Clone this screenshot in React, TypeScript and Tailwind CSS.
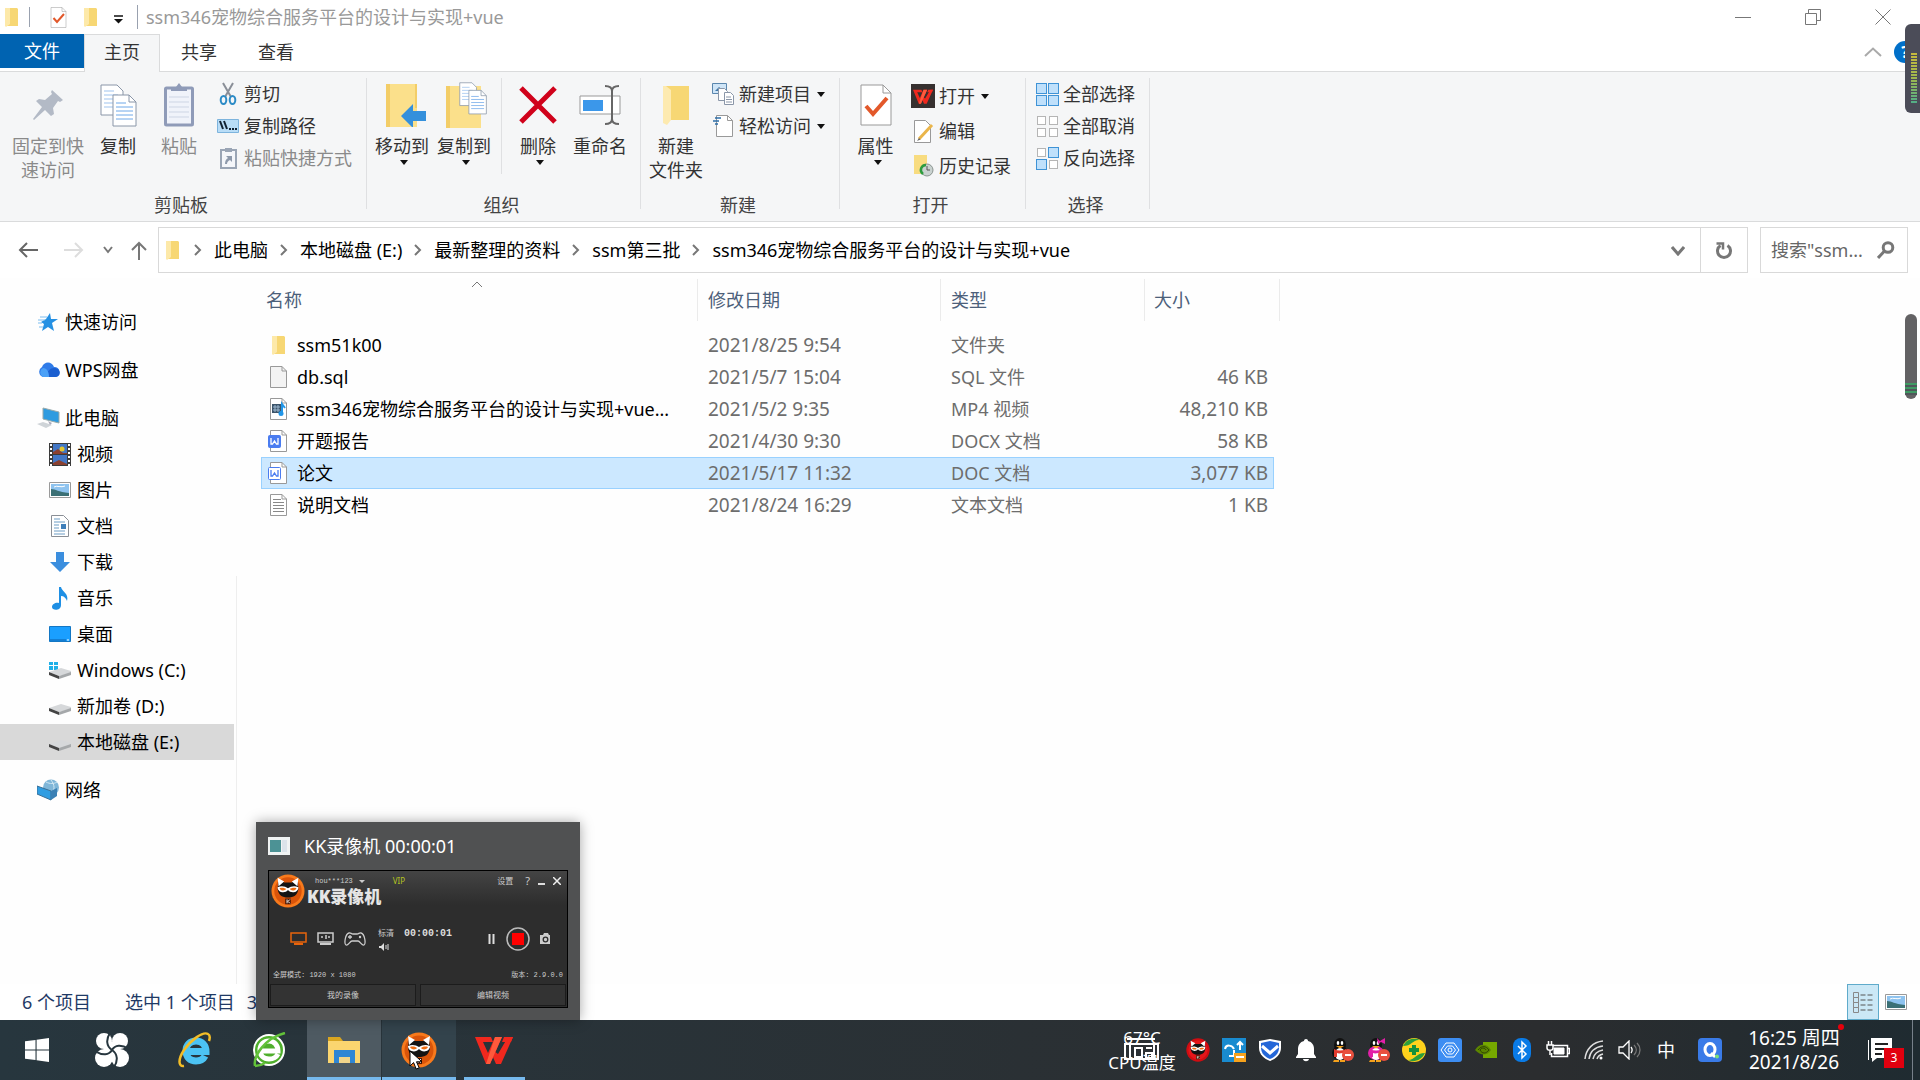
import type { ReactNode } from "react";

const BREADCRUMB = ["此电脑", "本地磁盘 (E:)", "最新整理的资料", "ssm第三批", "ssm346宠物综合服务平台的设计与实现+vue"];

const FILES = [
  { icon: <FolderIcon />, name: "ssm51k00", date: "2021/8/25 9:54", type: "文件夹", size: "" },
  { icon: <PageIcon kind="blank" />, name: "db.sql", date: "2021/5/7 15:04", type: "SQL 文件", size: "46 KB" },
  { icon: <PageIcon kind="video" />, name: "ssm346宠物综合服务平台的设计与实现+vue...", date: "2021/5/2 9:35", type: "MP4 视频", size: "48,210 KB" },
  { icon: <PageIcon kind="docx" />, name: "开题报告", date: "2021/4/30 9:30", type: "DOCX 文档", size: "58 KB" },
  { icon: <PageIcon kind="doc" />, name: "论文", date: "2021/5/17 11:32", type: "DOC 文档", size: "3,077 KB", selected: true },
  { icon: <PageIcon kind="text" />, name: "说明文档", date: "2021/8/24 16:29", type: "文本文档", size: "1 KB" },
];

export default function App() {
  return (
    <div className="relative flex h-screen flex-col overflow-hidden bg-[#fefefe] font-['Noto_Sans','Noto_Sans_CJK_SC',sans-serif] text-lg leading-6 text-black">
      <TitleBar />
      <Tabs />
      <Ribbon />
      <AddressBar />
      <div className="flex min-h-0 flex-1">
        <Sidebar />
        <FileList />
      </div>
      <StatusBar />
      <Taskbar />
      <RecorderPreview />

      {/* 悬浮小部件 */}
      <div className="absolute right-0 top-6 h-[89px] w-[15px] rounded-l-md bg-[#4b4c58] pl-1.5 pt-7">
        <div className="h-[52px] w-1.5 bg-[repeating-linear-gradient(#4b4c58_0_1px,transparent_1px_3px),linear-gradient(#c8b93c,#9fb84e_50%,#4fae8a)]" />
      </div>
      <div className="absolute right-[3px] top-[314px] flex h-[85px] w-3 flex-col justify-end rounded-full bg-[#636264] pb-1">
        <div className="h-3 bg-[repeating-linear-gradient(#3f9a63_0_2px,#50565a_2px_4px)]" />
      </div>
      <svg className="absolute bottom-2.5 left-[409px]" width="14" height="20" viewBox="0 0 14 20">
        <path d="M1 1v15l3.6-3.4L7.2 19l3-1.2-2.7-6H13L1 1Z" fill="#fff" stroke="#000" />
      </svg>
    </div>
  );
}

/* ---------- 窗口顶部 ---------- */

function TitleBar() {
  return (
    <header className="flex h-[34px] shrink-0 items-center bg-white">
      <div className="w-[30px] border-r border-gray-400 pl-1">
        <FolderIcon />
      </div>
      <button className="ml-5 w-[17px]" aria-label="属性">
        <CheckPage w={17} h={21} />
      </button>
      <button className="ml-4" aria-label="新建文件夹">
        <FolderIcon />
      </button>
      <button className="ml-4 flex h-6 w-6 items-center border-r border-gray-400" aria-label="自定义快速访问工具栏">
        <svg className="mt-1" width="9" height="9" viewBox="0 0 9 9">
          <path d="M0 1h9" stroke="#111" strokeWidth="1.500" />
          <path d="M0 4h9L4.500 8.500z" fill="#111" />
        </svg>
      </button>
      <h1 className="ml-2 text-[#999]">ssm346宠物综合服务平台的设计与实现+vue</h1>
      <div className="ml-auto flex items-center gap-[54px] pr-[29px]">
        <button aria-label="最小化">
          <svg width="16" height="16"><path d="M0 8.500h16" stroke="#777" /></svg>
        </button>
        <button aria-label="还原">
          <svg width="16" height="16" fill="none" stroke="#777">
            <path d="M.5 4.500h11v11H.5zM3.500 4V.5h12v11H12" />
          </svg>
        </button>
        <button aria-label="关闭">
          <svg width="16" height="16"><path d="M.5.5l15 15M15.500.5l-15 15" stroke="#777" /></svg>
        </button>
      </div>
    </header>
  );
}

function Tabs() {
  return (
    <nav className="flex h-[38px] shrink-0 items-start border-b border-[#dadbdc] bg-white">
      <button className="h-[34px] w-[84px] bg-[#0063b1] text-white">文件</button>
      <button className="h-[38px] w-19 border-x border-t border-[#dadbdc] bg-[#f5f6f7] pb-1 text-[#333]">主页</button>
      <button className="h-[36px] w-[78px] text-[#333]">共享</button>
      <button className="h-[36px] w-[76px] text-[#333]">查看</button>
      <div className="ml-auto flex h-9 items-center gap-3 overflow-hidden pr-1">
        <button aria-label="折叠功能区">
          <svg width="18" height="10" fill="none"><path d="m1 9 8-7.500L17 9" stroke="#aaa" strokeWidth="2" /></svg>
        </button>
        <button aria-label="帮助" className="size-[22px] rounded-full bg-[#0070c9] text-base leading-5 font-bold text-white">?</button>
      </div>
    </nav>
  );
}

function Ribbon() {
  return (
    <section className="flex h-[150px] shrink-0 border-b border-[#dadbdc] bg-[#f5f6f7] pt-1.5 text-[#333]">
      <Group label="剪贴板" width="w-[367px]">
        <div className="w-1.5" />
        <BigButton icon={<PinIcon />} text="固定到快速访问" width="w-[84px]" muted />
        <BigButton icon={<CopyIcon />} text="复制" width="w-[56px]" />
        <BigButton icon={<PasteIcon />} text="粘贴" width="w-[66px]" muted />
        <div className="ml-1">
          <SmallButton icon={<ScissorsIcon />} text="剪切" />
          <SmallButton icon={<PathIcon />} text="复制路径" />
          <SmallButton icon={<PasteLinkIcon />} text="粘贴快捷方式" muted />
        </div>
      </Group>
      <Group label="组织" width="w-[274px]">
        <div className="w-1" />
        <BigButton icon={<MoveIcon />} text="移动到" width="w-[62px]" arrow />
        <BigButton icon={<CopyToIcon />} text="复制到" width="w-[62px]" arrow />
        <div className="mx-1.5 h-[96px] border-l border-[#dfe0e2]" />
        <BigButton icon={<DeleteIcon />} text="删除" width="w-[60px]" arrow />
        <BigButton icon={<RenameIcon />} text="重命名" width="w-16" />
      </Group>
      <Group label="新建" width="w-[199px]">
        <BigButton icon={<NewFolderIcon />} text={"新建\n文件夹"} width="w-[70px]" />
        <div>
          <SmallButton icon={<NewItemIcon />} text="新建项目" arrow />
          <SmallButton icon={<EasyAccessIcon />} text="轻松访问" arrow />
        </div>
      </Group>
      <Group label="打开" width="w-[186px]">
        <BigButton icon={<CheckPage w={32} h={42} />} text="属性" width="w-[71px]" arrow />
        <div className="flex flex-col gap-[3px] pt-0.5">
          <SmallButton icon={<span className="flex size-6 items-center justify-center bg-[#36302f]"><WpsLogo w={20} h={19} /></span>} text="打开" arrow />
          <SmallButton icon={<EditIcon />} text="编辑" />
          <SmallButton icon={<HistoryIcon />} text="历史记录" />
        </div>
      </Group>
      <Group label="选择" width="w-[124px]">
        <div className="ml-[9px]">
          <SmallButton icon={<GridIcon filled={[0, 1, 2, 3]} />} text="全部选择" />
          <SmallButton icon={<GridIcon filled={[]} />} text="全部取消" />
          <SmallButton icon={<GridIcon filled={[1, 2]} />} text="反向选择" />
        </div>
      </Group>
    </section>
  );
}

function Group({ label, width, children }: { label: string; width: string; children: ReactNode }) {
  return (
    <div className={`${width} flex h-[131px] shrink-0 flex-col border-r border-[#dfe0e2]`}>
      <div className="flex h-[117px] shrink-0">{children}</div>
      <div className="shrink-0 pr-1 text-center leading-5 text-[#444]">{label}</div>
    </div>
  );
}

type ButtonProps = { icon: ReactNode; text: string; width?: string; arrow?: boolean; muted?: boolean };

function BigButton({ icon, text, width, arrow, muted }: ButtonProps) {
  return (
    <button className={`${width} ${muted ? "text-[#8a8a8a]" : ""} flex shrink-0 flex-col items-center`}>
      <span className="flex h-[56px] items-center pb-0.5">{icon}</span>
      <span className="whitespace-pre-line">{text}</span>
      {arrow && <span className="-mt-2.5 ml-1"><Caret /></span>}
    </button>
  );
}

function SmallButton({ icon, text, arrow, muted }: ButtonProps) {
  return (
    <button className={`${muted ? "text-[#8a8a8a]" : ""} flex h-8 items-center whitespace-nowrap`}>
      <span className="mr-1 flex w-6 justify-center">{icon}</span>
      {text}
      {arrow && <span className="ml-1.5 pb-1"><Caret /></span>}
    </button>
  );
}

const Caret = () => (
  <svg className="inline-block shrink-0" width="8" height="5" viewBox="0 0 8 5">
    <path d="M0 0h8L4 5z" fill="#111" />
  </svg>
);

function AddressBar() {
  return (
    <div className="flex h-[56px] shrink-0 items-center bg-white pr-3">
      <div className="flex w-[158px] shrink-0 items-center pl-[18px]">
        <button className="w-[46px]" aria-label="返回">
          <svg width="20" height="16" fill="none" stroke="#666" strokeWidth="2"><path d="M20 8H2M9 1 2 8l7 7" /></svg>
        </button>
        <button className="w-[39px]" aria-label="前进">
          <svg width="20" height="16" fill="none" stroke="#ddd" strokeWidth="2"><path d="M0 8h18M11 1l7 7-7 7" /></svg>
        </button>
        <button className="w-[28px]" aria-label="最近浏览的位置">
          <svg width="10" height="8" fill="none" stroke="#777" strokeWidth="2"><path d="m1 1 4 5 4-5" /></svg>
        </button>
        <button aria-label="上移">
          <svg width="16" height="19" fill="none" stroke="#777" strokeWidth="2"><path d="M8 19V2M1 9l7-7 7 7" /></svg>
        </button>
      </div>
      <nav className="flex h-[46px] flex-1 items-center border border-[#d9d9d9] pl-1.5">
        <FolderIcon />
        <span className="w-0.5" />
        {BREADCRUMB.map((item) => (
          <span key={item} className="flex items-center">
            <svg className="mx-3" width="8" height="12" fill="none" stroke="#777" strokeWidth="2"><path d="m1 1 5 5-5 5" /></svg>
            <a href="#">{item}</a>
          </span>
        ))}
        <button className="ml-auto flex h-full w-[46px] items-center justify-center border-r border-[#d9d9d9]" aria-label="以前的位置">
          <svg width="14" height="11" fill="none" stroke="#777" strokeWidth="3"><path d="m1 2 6 7 6-7" /></svg>
        </button>
        <button className="flex h-full w-[46px] items-center justify-center" aria-label="刷新">
          <svg width="18" height="19" fill="none" stroke="#777" strokeWidth="3">
            <path d="M12.500 4.500a6.500 6.500 0 1 1-7 0" />
            <path d="M1.500 2.500h6.500v6" strokeWidth="2.500" />
          </svg>
        </button>
      </nav>
      <form className="ml-3 flex h-[46px] w-[148px] items-center border border-[#d9d9d9] pl-2.5 pr-3">
        <input className="w-full min-w-0 text-[#666] outline-none placeholder:text-[#666]" placeholder={'搜索"ssm...'} aria-label="搜索" />
        <svg className="shrink-0" width="18" height="18" fill="none" stroke="#777" strokeWidth="3">
          <circle cx="11" cy="6.500" r="4.800" />
          <path d="M7.500 10 1 17" />
        </svg>
      </form>
    </div>
  );
}

/* ---------- 导航窗格 ---------- */

function Sidebar() {
  return (
    <aside className="flex w-[237px] shrink-0">
      <ul className="w-[234px] pt-[26px]">
        <NavItem icon={<StarIcon />} text="快速访问" />
        <li className="h-3" />
        <NavItem icon={<CloudIcon />} text="WPS网盘" />
        <li className="h-3" />
        <NavItem icon={<PcIcon />} text="此电脑" />
        <NavItem icon={<FilmIcon />} text="视频" nested />
        <NavItem icon={<PictureIcon />} text="图片" nested />
        <NavItem icon={<DocsIcon />} text="文档" nested />
        <NavItem icon={<svg width="20" height="20"><path d="M6 0h8v10h6L10 20 0 10h6z" fill="#3b8ede" /></svg>} text="下载" nested />
        <NavItem icon={<MusicIcon />} text="音乐" nested />
        <NavItem icon={<DesktopIcon />} text="桌面" nested />
        <NavItem icon={<DriveIcon windows />} text="Windows (C:)" nested />
        <NavItem icon={<DriveIcon />} text="新加卷 (D:)" nested />
        <NavItem icon={<DriveIcon />} text="本地磁盘 (E:)" nested active />
        <li className="h-3" />
        <NavItem icon={<NetworkIcon />} text="网络" />
      </ul>
      <div className="mt-[298px] ml-0.5 flex-1 border-l border-[#eee]" />
    </aside>
  );
}

function NavItem({ icon, text, nested, active }: { icon: ReactNode; text: string; nested?: boolean; active?: boolean }) {
  return (
    <li className={active ? "bg-[#d9d9d9]" : ""}>
      <a href="#" className={`flex h-9 items-center gap-[5px] ${nested ? "pl-12" : "pl-9"}`}>
        <span className="flex w-6 justify-center">{icon}</span>
        {text}
      </a>
    </li>
  );
}

/* ---------- 文件列表 ---------- */

function FileList() {
  return (
    <main className="relative min-w-0 flex-1 pl-6 pt-px">
      <svg className="absolute left-[234px] top-[3px]" width="12" height="7" fill="none"><path d="m1 6 5-5 5 5" stroke="#777" /></svg>
      <table className="w-[1013px] table-fixed text-[#6d6d6d]">
        <thead>
          <tr className="h-[42px] text-left text-[#4c607a]">
            <Th width="w-[437px]" text="名称" pad="pl-[5px]" />
            <Th width="w-[243px]" text="修改日期" pad="pl-2.5" />
            <Th width="w-[204px]" text="类型" pad="pl-2.5" />
            <Th width="w-[129px]" text="大小" pad="pl-[9px]" last />
          </tr>
        </thead>
        <tbody>
          <tr className="h-2" aria-hidden />
          {FILES.map((f) => (
            <tr key={f.name} className={`h-8 ${f.selected ? "bg-[#cce8ff] outline outline-1 -outline-offset-1 outline-[#99d1ff]" : ""}`}>
              <td className="p-0 pl-[5px] text-black">
                <span className="flex items-center">
                  <span className="mr-[7px] flex w-6 justify-center">{f.icon}</span>
                  <span className="whitespace-nowrap">{f.name}</span>
                </span>
              </td>
              <td className="p-0 pl-2.5 text-[19px]">{f.date}</td>
              <td className="p-0 pl-2.5">{f.type}</td>
              <td className="p-0 pr-1.5 text-right text-[19px]">{f.size}</td>
            </tr>
          ))}
        </tbody>
      </table>
    </main>
  );
}

function Th({ width, text, pad, last }: { width: string; text: string; pad: string; last?: boolean }) {
  return (
    <th className={`${width} p-0 font-normal`}>
      <div className={`${pad} ${last ? "-mr-1.5" : ""} flex h-[42px] items-center border-r border-[#ebebeb]`}>{text}</div>
    </th>
  );
}

function StatusBar() {
  return (
    <footer className="flex h-9 shrink-0 items-center bg-white pl-[22px] text-[#1f3a66]">
      <span>6 个项目</span>
      <span className="ml-[34px]">选中 1 个项目</span>
      <span className="ml-3">3.00 MB</span>
      <div className="ml-auto flex items-center pr-[13px]">
        <button className="flex h-9 w-8 items-center justify-center border border-[#5fabcb] bg-[#cbe8f6]" aria-label="详细信息">
          <svg width="22" height="22" fill="none" stroke="#555">
            <path d="M1.500 1.500h5v5h-5zM1.500 6.500h5v5h-5zM1.500 11.500h5v5h-5zM1.500 16.500h5v5h-5z" stroke="#888" />
            <path d="M8.500 4h5m2 0h5M8.500 9h5m2 0h5M8.500 14h5m2 0h5M8.500 19h5m2 0h5" />
          </svg>
        </button>
        <button className="ml-1.5" aria-label="大图标">
          <PictureIcon />
        </button>
      </div>
    </footer>
  );
}

/* ---------- 任务栏 ---------- */

function Taskbar() {
  return (
    <div className="flex h-15 shrink-0 bg-linear-to-r from-[#27363e] via-[#2b2d2f] via-80% to-[#1f2b31] text-white">
      <TaskButton label="开始">
        <svg width="24" height="24" viewBox="0 0 24 24" fill="#fff">
          <path d="M0 3.300 10.500 1.900v9.600H0zM11.600 1.700 24 0v11.500H11.600zM0 12.600h10.500v9.500L0 20.700zM11.600 12.600H24V24l-12.400-1.700z" />
        </svg>
      </TaskButton>
      <TaskButton label="搜狗"><SwirlIcon /></TaskButton>
      <div className="ml-[7px] flex">
        <TaskButton label="Internet Explorer"><IeIcon green={false} /></TaskButton>
        <TaskButton label="360浏览器"><IeIcon green /></TaskButton>
        <TaskButton label="文件资源管理器" className="bg-[#4e5a62]" line="w-full">
          <svg width="34" height="28" viewBox="0 0 34 28">
            <path d="M1 1h12l3 4h16v22H1z" fill="#d9a520" />
            <path d="M1 5h32v22H1z" fill="#fbd56f" />
            <path d="M7 27V14h21v13h-5v-6H12v6z" fill="#2f86d4" />
            <path d="M12 27v-6h11v6z" fill="#f2d58a" />
          </svg>
        </TaskButton>
        <TaskButton label="KK录像机" className="bg-[#33434c]" line="w-full"><NinjaIcon size={36} /></TaskButton>
        <TaskButton label="WPS" line="w-[61px]"><WpsLogo w={38} h={28} /></TaskButton>
      </div>

      <div className="ml-auto flex items-center">
        <div className="relative flex w-[76px] flex-col items-center text-[17px] leading-[25px]">
          <span>67°C</span>
          <span className="whitespace-nowrap">CPU温度</span>
          <svg className="absolute top-3" width="36" height="26" viewBox="0 0 36 26" fill="none" stroke="#fff" strokeWidth="2">
            <path d="M3 2h28M1 7h33v15H1zM6 7v15M30 7v15M11 11h7v9h-7zM22 11h6M22 16h6v5h-6z" />
          </svg>
        </div>
        <Tray label="KK录像机"><NinjaIcon size={24} red /></Tray>
        <Tray label="同步">
          <svg width="24" height="24" viewBox="0 0 24 24" fill="none">
            <path d="M0 0h24v24H0z" fill="#198bd0" />
            <path d="M3 11c1-5 7-4 9 0M12 12v6H7M18 12V4M15 7l3-3 3 3" stroke="#fff" strokeWidth="2" />
            <path d="M12 15h12v9H12z" fill="#f6a21c" />
            <path d="M14 19h8" stroke="#fff" strokeWidth="2" />
          </svg>
        </Tray>
        <Tray label="安全">
          <svg width="24" height="24" viewBox="0 0 24 24" fill="none">
            <path d="M12 1 23 3v7c0 6-5 11-11 13C6 21 1 16 1 10V3z" fill="#fff" />
            <path d="M12 3l9 2v5c0 5-4 9-9 11-5-2-9-6-9-11V5z" fill="#2467d8" />
            <path d="m4 8 8 7 8-7" stroke="#fff" strokeWidth="3" />
          </svg>
        </Tray>
        <Tray label="通知">
          <svg width="24" height="24" viewBox="0 0 24 24" fill="#fff">
            <path d="M12 1c1.200 0 2 .8 2 2 4 1 6 4 6 8v5l2 3v1H2v-1l2-3v-5c0-4 2-7 6-8 0-1.200.8-2 2-2zM9 21h6c-.5 3-5.500 3-6 0z" />
          </svg>
        </Tray>
        <Tray label="QQ"><PenguinIcon scarf="#e23b2e" /></Tray>
        <Tray label="QQ"><PenguinIcon scarf="#e21fa8" pink /></Tray>
        <Tray label="360安全卫士">
          <svg width="24" height="24" viewBox="0 0 24 24">
            <circle cx="12" cy="12" r="12" fill="#ffd21c" />
            <path d="M1 8C4 1 12-1 18 2c-7-1-8 6-17 6zM23 15c-3 7-11 10-17 7 7 0 8-7 17-7z" fill="#2b9e3c" />
            <path d="M10 7h4v3h3v4h-3v3h-4v-3H7v-4h3z" fill="#15913b" />
          </svg>
        </Tray>
        <Tray label="显卡控制">
          <svg width="24" height="24" viewBox="0 0 24 24" fill="none" stroke="#fff">
            <rect width="24" height="24" rx="3" fill="#3d8df2" stroke="none" />
            <path d="M8 5h8l5 7-5 7H8l-5-7z" />
            <path d="M9.500 8h5l3 4-3 4h-5l-3-4z" />
            <circle cx="12" cy="12" r="2" />
          </svg>
        </Tray>
        <Tray label="NVIDIA">
          <svg width="22" height="16" viewBox="0 0 22 16" fill="none">
            <path d="M8 0h14v16H8z" fill="#76a800" />
            <path d="M0 8c4-7 12-7 16 0-4 6-10 6-16 0z" fill="#5c8500" />
            <path d="M3 8c4-5 8-4 11 0-3 4-7 4-9 0 2-3 5-2 6 0" stroke="#2f4500" />
          </svg>
        </Tray>
        <Tray label="蓝牙">
          <svg width="18" height="24" viewBox="0 0 18 24" fill="none">
            <rect width="18" height="24" rx="8" fill="#0a7be6" />
            <path d="m5 8 8 8-4 4V4l4 4-8 8" stroke="#fff" strokeWidth="1.500" />
          </svg>
        </Tray>
        <Tray label="电池">
          <svg width="24" height="18" viewBox="0 0 24 18" fill="none" stroke="#fff">
            <path d="M7 4.500h14.500v11H5.500V12M22 7.500h1.500v5H22" strokeWidth="1.500" />
            <path d="M8 7h10v6H8z" fill="#fff" />
            <path d="M1 4h6v3c0 3-6 3-6 0zM2.500 4V0M5.500 4V0M4 9v5" strokeWidth="1.500" />
          </svg>
        </Tray>
        <Tray label="网络">
          <svg width="20" height="20" viewBox="0 0 20 20" fill="none" stroke="#ddd" strokeWidth="1.500">
            <path d="M1 19C2 9 9 2 19 1M5 19c1-7 6-12 14-13M9 19c1-5 4-8 10-9M13 19c.5-2 2-4 6-5" />
            <circle cx="17" cy="18" r="1.500" fill="#fff" stroke="none" />
          </svg>
        </Tray>
        <Tray label="音量">
          <svg width="24" height="20" viewBox="0 0 24 20" fill="none" stroke="#fff" strokeWidth="1.300">
            <path d="M1 7h4l6-6v18l-6-6H1z" />
            <path d="M13 7c1.500 2 1.500 4 0 6" />
            <path d="M16 5c3 3 3 7 0 10M19 3c4 4 4 10 0 14" stroke="#777" />
          </svg>
        </Tray>
        <Tray label="输入法"><span className="text-lg">中</span></Tray>
        <Tray label="QQ浏览器" className="ml-2">
          <svg width="24" height="24" viewBox="0 0 24 24" fill="none">
            <rect width="24" height="24" rx="4" fill="#3a7be8" />
            <ellipse cx="12" cy="11.500" rx="5" ry="6" stroke="#fff" strokeWidth="3" />
            <path d="m13 15 4 4" stroke="#fff" strokeWidth="2.500" />
            <circle cx="19" cy="18.500" r="2" fill="#7ce07a" />
          </svg>
        </Tray>
        <div className="relative w-[132px] text-center text-[19px] leading-6">
          16:25 周四
          <br />
          2021/8/26
          <i className="absolute right-4 -top-0.5 size-1.5 rounded-full bg-red-600" />
        </div>
        <button className="relative mr-1 ml-2 h-7 w-10" aria-label="操作中心">
          <svg width="26" height="26" viewBox="0 0 26 26">
            <path d="M3 1h21v20H9l-5 4V21H3z" fill="#fff" />
            <path d="M.5 3v20" stroke="#fff" />
            <path d="M7 7h13M7 12h13M7 17h7" stroke="#222" strokeWidth="2" />
          </svg>
          <span className="absolute left-4 top-3 size-5 bg-[#e2000f] text-center text-xs leading-5">3</span>
        </button>
        <div className="mr-[7px] h-15 w-px bg-[#77808a]" />
      </div>
    </div>
  );
}

function TaskButton({ label, className = "", line, children }: { label: string; className?: string; line?: string; children: ReactNode }) {
  return (
    <button aria-label={label} className={`${className} relative mr-px flex h-15 w-[74px] items-center justify-center`}>
      {children}
      {line && <span className={`${line} absolute bottom-0 h-[3px] bg-[#76b9ed]`} />}
    </button>
  );
}

function Tray({ label, className = "", children }: { label: string; className?: string; children: ReactNode }) {
  return (
    <button aria-label={label} className={`${className} flex h-15 w-9 items-center justify-center`}>
      {children}
    </button>
  );
}

/* ---------- 任务栏缩略图 ---------- */

function RecorderPreview() {
  return (
    <div className="absolute bottom-15 left-64 w-[324px] bg-[#505152] px-3 pb-3 text-white shadow-[0_0_12px_rgba(0,0,0,0.35)]">
      <div className="flex h-12 items-center gap-3.5">
        <svg width="22" height="18">
          <path d="M0 0h22v18H0z" fill="#f0f3f3" />
          <path d="M2 3h11v12H2z" fill="#4c9295" />
          <path d="M14 3h5v12h-5z" fill="#dbe3ea" />
        </svg>
        KK录像机 00:00:01
      </div>
      <div className="flex h-[138px] flex-col border border-black bg-linear-to-b from-[#444] via-[#2d2d2d] via-25% to-[#2d2d2d] text-[8px] leading-3 text-[#ccc]">
        <div className="flex h-[42px] pl-0.5">
          <div className="pt-[3px]"><NinjaIcon size={34} /></div>
          <div className="ml-0.5 pt-1">
            <div className="flex items-center pl-2 font-['Liberation_Mono','Noto_Sans_CJK_SC',monospace] text-[7px]">
              hou***123
              <svg className="ml-1.5" width="6" height="3"><path d="M0 0h6L3 3z" fill="#ccc" /></svg>
              <span className="ml-7 font-['Noto_Sans'] text-[8px] text-[#b5c222]">VIP</span>
            </div>
            <div className="text-[17px] leading-5 font-black text-[#e5e5e5]">KK录像机</div>
          </div>
          <div className="ml-auto flex h-5 items-center gap-2 pr-1.5">
            <span>设置</span>
            <span className="ml-1 text-[11px]">?</span>
            <svg width="7" height="8"><path d="M0 7h7" stroke="#ddd" strokeWidth="2" /></svg>
            <svg width="8" height="8"><path d="m0 0 8 8M8 0 0 8" stroke="#eee" strokeWidth="1.500" /></svg>
          </div>
        </div>
        <div className="mt-3 flex h-7 items-center pr-[17px] pl-[21px]">
          <svg width="76" height="14" viewBox="0 0 76 14" fill="none">
            <path d="M1 1h15v9H1z" stroke="#e8640c" strokeWidth="1.500" />
            <path d="M4 12h9" stroke="#e8640c" strokeWidth="2" />
            <path d="M28 1h15v9H28zM32 6v-2M36 7V3M39 6V4" stroke="#ccc" strokeWidth="1.500" />
            <path d="M30 12h11" stroke="#ccc" strokeWidth="2" />
            <path d="M59 1c-4 1-5 11-3 12s4-4 6-4h6c2 0 4 5 6 4s1-11-3-12c-2-.5-2 1-4 1h-4c-2 0-2-1.500-4-1zM58 5h4M60 3v4" stroke="#ccc" strokeWidth="1.300" />
            <circle cx="70" cy="5" r="1.200" fill="#ccc" />
          </svg>
          <div className="ml-3">
            <div>标清</div>
            <svg className="mt-1" width="12" height="8" fill="none">
              <path d="M1 3h2l3-3v8L3 5H1z" fill="#ddd" />
              <path d="M8 2v4M10 1v6" stroke="#ddd" />
            </svg>
          </div>
          <div className="ml-2.5 mb-2.5 font-['Liberation_Mono',monospace] text-[10px] font-bold text-[#ddd]">00:00:01</div>
          <svg className="ml-auto" width="66" height="26" viewBox="0 0 66 26" fill="none">
            <path d="M5.500 8v10M9.500 8v10" stroke="#ddd" strokeWidth="2" />
            <circle cx="34" cy="13" r="11" stroke="#bbb" strokeWidth="1.500" />
            <path d="M28 7h12v12H28z" fill="#f00" />
            <path d="M56 9h3l1-2h4l1 2h2v9H56z" fill="#ccc" />
            <circle cx="61.500" cy="13.500" r="2.300" stroke="#2d2d2d" strokeWidth="1.300" />
          </svg>
        </div>
        <div className="mt-auto flex h-4 items-center justify-between px-1 font-['Liberation_Mono','Noto_Sans_CJK_SC',monospace] text-[7px]">
          <span>全屏模式: 1920 x 1080</span>
          <span>版本: 2.9.0.0</span>
        </div>
        <div className="flex h-6 gap-1 p-px">
          <button className="flex-1 border border-[#1c1c1c] bg-[#333]">我的录像</button>
          <button className="flex-1 border border-[#1c1c1c] bg-[#333]">编辑视频</button>
        </div>
      </div>
    </div>
  );
}

/* ---------- 图标 ---------- */

function FolderIcon() {
  return (
    <svg width="15" height="20" viewBox="0 0 15 20">
      <path d="M1 1h12l1 1v17H1z" fill="#f7d774" />
      <path d="M1 1h5v16l-4 3-1-1z" fill="#fde9a9" />
    </svg>
  );
}

function PageIcon({ kind }: { kind: "blank" | "video" | "docx" | "doc" | "text" }) {
  return (
    <svg width="22" height="24" viewBox="0 0 22 24" fill="none">
      <path d="M3.500 1.500H15l4.500 4.500v16.500h-16z" fill={kind === "blank" ? "#f3f3f3" : "#fff"} stroke="#999" />
      <path d="M15 1.500V6h4.500" stroke="#999" />
      {kind === "video" && (
        <>
          <path d="M5 7h9v9H5z" fill="#3d556b" />
          <path d="M6 10h7M6 13h7M8 8v7M11 8v7" stroke="#9db8d0" />
          <path d="M15 16V7l3 4" stroke="#2196e8" strokeWidth="2" />
          <circle cx="14" cy="16.500" r="2.500" fill="#2196e8" />
        </>
      )}
      {(kind === "docx" || kind === "doc") && (
        <>
          <rect x="1.500" y="6.500" width="12" height="12" rx="1" fill={kind === "docx" ? "#4a7cf0" : "#fff"} stroke="#4a7cf0" />
          <path d="M4 9v6h1.500L7.500 12l2 3H11V9" stroke={kind === "docx" ? "#fff" : "#4a7cf0"} strokeWidth="1.300" />
        </>
      )}
      {kind === "text" && <path d="M6 6.500h8M6 9.500h11M6 12.500h11M6 15.500h11M6 18.500h11" stroke="#888" />}
    </svg>
  );
}

const CheckPage = ({ w, h }: { w: number; h: number }) => (
  <svg width={w} height={h} viewBox="0 0 32 42" fill="none">
    <path d="M1 1h22l8 8v32H1z" fill="#fff" stroke="#999" />
    <path d="M23 1v8h8" stroke="#999" />
    <path d="m6 22 7 8 14-16" stroke="#e2582a" strokeWidth="4" />
  </svg>
);

const PinIcon = () => (
  <svg width="32" height="32" viewBox="0 0 32 32" fill="#b3bac6">
    <path d="m20 1 11 10-3 2-2-1-5 7 1 6-3 2-6-6L2 31l-1-1 9-12-6-6 3-2 6 1 7-6-1-2z" />
  </svg>
);

const SheetPair = () => (
  <>
    <path d="M1 1h16l6 6v24H1z" fill="#fff" stroke="#8a96a8" />
    <path d="M4 7h10M4 11h14M4 15h14M4 19h14M4 23h14" stroke="#9fc3ee" />
    <path d="M13 11h16l7 7v24H13z" fill="#fff" stroke="#8a96a8" />
    <path d="M29 11v7h7" stroke="#8a96a8" />
    <path d="M16 19h10M16 23h17M16 27h17M16 31h17M16 35h17" stroke="#6fa8e8" />
  </>
);

const CopyIcon = () => (
  <svg width="37" height="43" viewBox="0 0 37 43" fill="none"><SheetPair /></svg>
);

const PasteIcon = () => (
  <svg width="30" height="44" viewBox="0 0 30 44" fill="none">
    <rect x="1.500" y="5" width="27" height="37" rx="1" fill="#f0f3fa" stroke="#8f9bb8" strokeWidth="3" />
    <path d="M7 8V4h5l3-4 3 4h5v4z" fill="#8f9bb8" />
    <path d="M5 14h20M5 19h20M5 24h20M5 29h20M5 34h20" stroke="#cdd5e4" />
  </svg>
);

const ScissorsIcon = () => (
  <svg width="18" height="24" viewBox="0 0 18 24" fill="none">
    <path d="M4 1 12 15M14 1 6 15" stroke="#8a8f98" strokeWidth="2" />
    <ellipse cx="4.500" cy="18" rx="2.800" ry="4" stroke="#2c8bc6" strokeWidth="2" />
    <ellipse cx="13.500" cy="18" rx="2.800" ry="4" stroke="#2c8bc6" strokeWidth="2" />
  </svg>
);

const PathIcon = () => (
  <svg width="22" height="14" viewBox="0 0 22 14" fill="none">
    <path d="M.5.5h21v13H.5z" fill="#b9ddf7" stroke="#7db4dd" />
    <path d="m3 2 3 8M7 2l3 8M12 10h2M15 10h2M18 10h2" stroke="#123" strokeWidth="2" />
  </svg>
);

const PasteLinkIcon = () => (
  <svg width="17" height="22" viewBox="0 0 17 22" fill="none">
    <path d="M1 3h15v18H1z" fill="#f4f6fa" stroke="#9aa5b5" strokeWidth="2" />
    <path d="M5 5V1h7v4z" fill="#9aa5b5" />
    <path d="M5 17c0-3 1-5 3-6L6 9h6v6l-2-2c-2 1-3 2-3 4z" fill="#8d99ab" />
  </svg>
);

const MoveIcon = () => (
  <svg className="ml-2" width="40" height="43" viewBox="0 0 40 43">
    <path d="M0 0h31v43H0z" fill="#fbe08b" />
    <path d="M0 0h4v43H0zM29 0h2v24h-2z" fill="#f3cd67" />
    <path d="M15 32 27 20v7h13v10H27v7z" fill="#3490dc" />
  </svg>
);

const CopyToIcon = () => (
  <svg className="ml-1.5" width="42" height="46" viewBox="0 0 42 46" fill="none">
    <path d="M0 4h35v42H0z" fill="#fbe08b" />
    <path d="M0 4h4v42H0z" fill="#f3cd67" />
    <g transform="translate(13 0) scale(.76)"><SheetPair /></g>
  </svg>
);

const DeleteIcon = () => (
  <svg width="38" height="38" viewBox="0 0 38 38"><path d="m2 2 34 34M36 2 2 36" stroke="#d0021b" strokeWidth="5" /></svg>
);

const RenameIcon = () => (
  <svg width="42" height="40" viewBox="0 0 42 40" fill="none">
    <path d="M1 11h40v18H1z" fill="#fff" stroke="#999" />
    <path d="M4 15h20v11H4z" fill="#3b97ea" />
    <path d="M26 1c4 0 7 1 7 5v28c0 4-3 5-7 5M40 1c-4 0-7 1-7 5v28c0 4 3 5 7 5" stroke="#666" strokeWidth="2" />
  </svg>
);

const NewFolderIcon = () => (
  <svg width="28" height="40" viewBox="0 0 28 40">
    <path d="M1 1h26v34H1z" fill="#f7d774" />
    <path d="M1 1h3l5 4v30l-4 5-4-2z" fill="#fdeab0" />
  </svg>
);

const NewItemIcon = () => (
  <svg width="22" height="22" viewBox="0 0 22 22" fill="none">
    <path d="M.5.5h14v10H.5z" fill="#cfe5f7" stroke="#5b87ae" />
    <path d="M3 8l4-4 5 4z" fill="#3f77a8" />
    <path d="M6.500 5.500h6l3 3v9h-9z" fill="#fff" stroke="#8a96a8" />
    <path d="M12.500 9.500h6l3 3v9h-9z" fill="#fff" stroke="#8a96a8" />
    <path d="M14 14h5M14 16.500h6M14 19h6" stroke="#8a96a8" />
  </svg>
);

const EasyAccessIcon = () => (
  <svg width="20" height="22" viewBox="0 0 20 22" fill="none">
    <path d="M3.500.5h11l5 5v16h-16z" fill="#fff" stroke="#999" />
    <path d="M14.500.5v5h5" stroke="#999" />
    <path d="M2 3h6M0 6h6M2 9h3" stroke="#2d6da8" strokeWidth="1.500" />
  </svg>
);

const EditIcon = () => (
  <svg width="22" height="23" viewBox="0 0 22 23" fill="none">
    <path d="M2.500.5h11l5 5v17h-16z" fill="#fff" stroke="#999" />
    <path d="M7 19 20 5" stroke="#eab54a" strokeWidth="3" />
    <path d="m5 21 2-3 1.500 1.500z" fill="#666" />
  </svg>
);

const HistoryIcon = () => (
  <svg width="22" height="22" viewBox="0 0 22 22" fill="none">
    <path d="M2 0h13v19H2z" fill="#f8dc80" />
    <circle cx="15" cy="15" r="6" fill="#c9d2d0" stroke="#8a9490" />
    <path d="M15 11v4h3" stroke="#555" />
    <path d="M11 19c-4-3-2-9 3-9" stroke="#2c9b3f" strokeWidth="2.500" />
  </svg>
);

const CELLS = [[0, 0], [12, 0], [0, 12], [12, 12]];

const GridIcon = ({ filled }: { filled: number[] }) => (
  <svg width="23" height="23" viewBox="-.5 -.5 23 23">
    {CELLS.map(([x, y], i) =>
      filled.includes(i) ? (
        <rect key={i} x={x} y={y} width="10" height="10" fill="#bfe0fb" stroke="#3f93d6" />
      ) : (
        <rect key={i} x={x + 1} y={y + 1} width="8" height="8" fill="#fff" stroke="#b5b5b5" />
      )
    )}
  </svg>
);

const WpsLogo = ({ w, h }: { w: number; h: number }) => (
  <svg width={w} height={h} viewBox="0 0 38 28">
    <path d="M0 1h16l2 5H8l5 11 7-16h7L15 28h-4z" fill="#f0281e" />
    <path d="m19 15 4 3L33 1h5L26 28h-5l-4-9z" fill="#f0281e" />
    <path d="M29 1h9l-2 5h-9z" fill="#f0281e" />
    <path d="M20 1h7L15 28h-4z" fill="#ff5a3c" />
  </svg>
);

const StarIcon = () => (
  <svg width="20" height="20" viewBox="0 0 20 20">
    <path d="m12 1 1 6h7l-6 4 2 8-6-4-6 4 2-7-3-2 5-3z" fill="#2490e3" />
    <path d="M2 5h7M0 8h7M0 11h4M1 15h4" stroke="#7bbdf0" />
  </svg>
);

const CloudIcon = () => (
  <svg width="23" height="16" viewBox="0 0 23 16">
    <path d="M6 15a5.500 5.500 0 0 1-1-10c2-6 10-6 12 0a5 5 0 0 1 1 10z" fill="#2f7be8" />
    <path d="M10 15c-1-5 3-9 7-9 7 0 8 9 1 9z" fill="#1b5fd0" />
    <path d="M6 15a5 5 0 0 1 0-9c4 0 6 4 6 9z" fill="#4ba1f7" />
  </svg>
);

const PcIcon = () => (
  <svg width="24" height="22" viewBox="0 0 24 22">
    <path d="m7 1 16 4v11L7 12z" fill="#2e9be0" stroke="#9aa" />
    <path d="m1 17 6-2 9 3-6 3z" fill="#cfd4d8" />
    <path d="m12 14 4 2-2 2z" fill="#aab" />
  </svg>
);

const FilmIcon = () => (
  <svg width="22" height="23" viewBox="0 0 22 23">
    <path d="M0 0h22v23H0z" fill="#3b3b3b" />
    <path d="M4 1h14v10H4zM4 12h14v10H4z" fill="#4276c4" />
    <path d="m4 9 5-3 5 4h4v1H4zM4 20l6-3 8 4v1H4z" fill="#8a4030" />
    <circle cx="13" cy="6" r="2.500" fill="#e3c52e" />
    <path d="M2 1v22M20 1v22" stroke="#fff" strokeWidth="2" strokeDasharray="2 2" />
  </svg>
);

function PictureIcon() {
  return (
    <svg width="22" height="16" viewBox="0 0 22 16">
      <path d="M.5.5h21v15H.5z" fill="#fff" stroke="#9a9a9a" />
      <path d="M2 2h18v12H2z" fill="#8ec3ef" />
      <path d="M2 7c5 0 7 3 18 4v3H2z" fill="#3b7075" />
      <path d="M5 5c3-2 7 1 11-1" stroke="#fff" fill="none" />
    </svg>
  );
}

const DocsIcon = () => (
  <svg width="18" height="22" viewBox="0 0 18 22" fill="none">
    <path d="M.5.5h12l5 5v16H.5z" fill="#fff" stroke="#8a8f96" />
    <path d="M3 4h6M3 7h11M3 10h5M3 13h5M3 16h11M3 19h11" stroke="#6d9dc5" />
    <path d="M10 9h5v5h-5z" fill="#3f7fba" />
  </svg>
);

const MusicIcon = () => (
  <svg width="18" height="23" viewBox="0 0 18 23">
    <path d="M8 0h2c1 5 8 6 6 14-1-3-3-5-6-5v9c0 6-9 6-9 2 0-3 4-5 7-4z" fill="#1e8fe4" />
  </svg>
);

const DesktopIcon = () => (
  <svg width="22" height="16" viewBox="0 0 22 16">
    <path d="M.5.5h21v15H.5z" fill="#1a9fff" stroke="#1377c4" />
    <path d="M1 14h16" stroke="#0d5fa8" />
    <path d="M18 14h2" stroke="#fff" />
  </svg>
);

const DriveIcon = ({ windows }: { windows?: boolean }) => (
  <svg width="22" height="20" viewBox="0 0 22 20">
    {windows && <path d="M0 2h4v3H0zM5 2h4v3H5zM0 6h4v4H0zM5 6h4v4H5z" fill="#1fb0e8" />}
    <path d="m0 12 12-4 10 3v2l-12 3z" fill="#d6d8da" />
    <path d="m0 12 10 4v3L0 15z" fill="#444" />
    <path d="m10 16 12-4v3l-12 4z" fill="#a5a8aa" />
  </svg>
);

const NetworkIcon = () => (
  <svg width="22" height="22" viewBox="0 0 22 22">
    <circle cx="14" cy="8.500" r="8" fill="#7fb6d8" />
    <path d="M9 3c4 2 8 2 11 0M14 1c4 5 4 10 0 15" stroke="#d2e8f4" fill="none" />
    <path d="m0 7 14 5v9L0 15z" fill="#2f9de2" stroke="#3a6f96" />
    <path d="m14 12 6-3v8l-6 4z" fill="#3a80b4" />
  </svg>
);

const SwirlIcon = () => (
  <svg width="34" height="34" viewBox="-17 -17 34 34" fill="#fff">
    <circle cx="-8" cy="-9" r="8" />
    <circle cx="8" cy="-9" r="8" />
    <circle cx="-8" cy="8" r="9" />
    <circle cx="8" cy="8" r="9" />
    <path d="M-8-8H8V8H-8z" />
    <path
      d="M0 0C-6-4-6-11-2-17M0 0c3-5 9-6 17-1M0 0c6 4 6 11 2 17M0 0c-3 5-9 6-17 1"
      fill="none"
      stroke="#27363e"
      strokeWidth="2"
    />
  </svg>
);

const IeIcon = ({ green }: { green: boolean }) => (
  <svg width="36" height="36" viewBox="0 0 36 36" fill="none">
    {green && <circle cx="18" cy="18" r="15" fill="#4faf2c" stroke="#fff" strokeWidth="2" />}
    <path
      d={green ? "M27 22c-2 4-5 5-9 5-5 0-9-3-9-9s4-9 9-9 9 4 9 10H11" : "M29 24c-2 4-5 5-9 5-6 0-10-4-10-10S14 9 20 9s10 4 10 10.500H13"}
      stroke={green ? "#fff" : "#4cc3f3"}
      strokeWidth={green ? 5 : 7}
    />
    <path
      d={green ? "M4 34C2 24 14 6 34 1M4 34c5 0 7-1 10-3" : "M8 34c-6 1-6-7 0-16C15 8 27-1 32 2c2 1 2 4 1 7"}
      stroke={green ? "#63c23a" : "#f3bd27"}
      strokeWidth="2.500"
    />
  </svg>
);

const NinjaIcon = ({ size, red }: { size: number; red?: boolean }) => (
  <svg width={size} height={size} viewBox="0 0 36 36">
    <circle cx="18" cy="18" r="17.500" fill={red ? "#cf0d12" : "#f87a1c"} />
    <circle cx="18" cy="18" r="14.500" fill={red ? "#e5161a" : "#d9540a"} />
    <path d="M8 5l6 4h8l6-4 1 11c-1 7-5 9-11 9S8 23 7 16z" fill="#141414" />
    <path d="m7 4 7 4-6 5zM29 4l-7 4 6 5z" fill="#fff" />
    <path d="M7 14c4-2 8-1 11 1 3-2 7-3 11-1 0 6-8 7-11 3-3 4-11 3-11-3z" fill="#fff" />
    <path d="M9 15c3-1 6 0 7 1-1 2-6 2-7-1zM27 15c-3-1-6 0-7 1 1 2 6 2 7-1z" fill="#ef6d12" />
    <path d="M15 26h6v6h-6z" fill="#4a1a08" />
    <path d="M17 27v4M20 27l-2 2 2 2" stroke="#fff" fill="none" />
  </svg>
);

const PenguinIcon = ({ scarf, pink }: { scarf: string; pink?: boolean }) => (
  <svg width="24" height="24" viewBox="0 0 24 24">
    <ellipse cx="10" cy="7" rx="6" ry="7" fill="#111" />
    <ellipse cx="10" cy="15" rx="8" ry="7" fill={pink ? scarf : "#111"} />
    <ellipse cx="10" cy="16" rx="5" ry="6" fill="#fff" />
    <ellipse cx="8" cy="5" rx="1.300" ry="2" fill="#fff" />
    <ellipse cx="12" cy="5" rx="1.300" ry="2" fill="#fff" />
    <path d="M6 8h8l-4 2.500zM4 22h5v2H3zM10 22h5v2h-5z" fill="#f5a11b" />
    <path d="M4 11c4 2 8 2 12 0v3c-3 1-7 2-9 1v4H4z" fill={scarf} />
    {pink && <path d="m14 3-3-3 1 6 3-2 4 2V0z" fill={scarf} />}
    <circle cx="18" cy="17" r="6" fill="#e8503f" />
    <path d="M15 17h6" stroke="#fff" strokeWidth="2" />
  </svg>
);
